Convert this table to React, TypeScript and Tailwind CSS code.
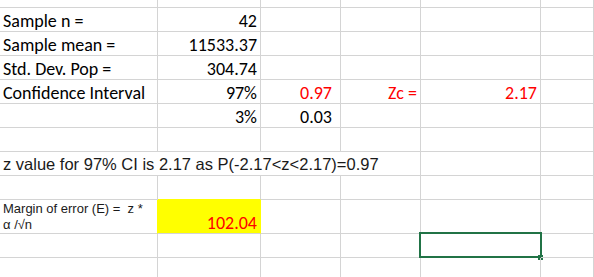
import type { ReactNode } from "react";

const line = "border-[#d4d4d4]";

type CellProps = {
  children?: ReactNode;
  className?: string;
};

const Cell = ({ children, className = "" }: CellProps) => (
  <div
    className={`relative flex items-end border-r border-b ${line} overflow-visible whitespace-nowrap ${className}`}
  >
    {children}
  </div>
);

const calibri = "font-['Carlito','Lato',sans-serif] text-[18px] leading-[18px] pb-[1px]";
const arial = "font-['Liberation_Sans',Arial,sans-serif]";

const labelRows = [
  { label: "Sample n =", value: "42" },
  { label: "Sample mean =", value: "11533.37" },
  { label: "Std. Dev. Pop =", value: "304.74" },
];

const Empty = () => (
  <>
    <Cell />
    <Cell />
    <Cell />
    <Cell />
    <Cell />
    <Cell />
  </>
);

export default function App() {
  return (
    <div className="w-[594px] h-[277px] overflow-hidden bg-white text-black">
      <div className="grid grid-cols-[158px_103px_80px_80px_120px_1fr] grid-rows-[8px_24px_24px_24px_24px_24px_24px_24px_24px_34px_24px_24px]">
        {/* row 0 (partial) */}
        <Empty />

        {labelRows.map((r) => (
          <div key={r.label} className="contents">
            <Cell className={`${calibri} pl-[3px]`}>{r.label}</Cell>
            <Cell className={`${calibri} justify-end pr-[3px]`}>{r.value}</Cell>
            <Cell />
            <Cell />
            <Cell />
            <Cell />
          </div>
        ))}

        {/* confidence interval */}
        <Cell className={`${calibri} pl-[3px]`}>Confidence Interval</Cell>
        <Cell className={`${calibri} justify-end pr-[3px]`}>97%</Cell>
        <Cell className={`${calibri} justify-end pr-[8px] text-[#ff0000]`}>0.97</Cell>
        <Cell className={`${calibri} justify-end pr-[3px] text-[#ff0000]`}>Zc =</Cell>
        <Cell className={`${calibri} justify-end pr-[3px] text-[#ff0000]`}>2.17</Cell>
        <Cell />

        <Cell />
        <Cell className={`${calibri} justify-end pr-[3px]`}>3%</Cell>
        <Cell className={`${calibri} justify-end pr-[8px]`}>0.03</Cell>
        <Cell />
        <Cell />
        <Cell />

        <Empty />

        {/* z value note, spills over A..D */}
        <Cell className={`col-span-4 ${arial} text-[16.5px] leading-[19px] pb-[1px] pl-[3px] text-[#1a1a1a]`}>
          z value for 97% CI is 2.17 as P(-2.17&lt;z&lt;2.17)=0.97
        </Cell>
        <Cell />
        <Cell />

        {/* row above margin: B cell bottom hidden by fill */}
        <Cell />
        <Cell className="border-b-[#ffff00]" />
        <Cell />
        <Cell />
        <Cell />
        <Cell />

        {/* margin of error */}
        <Cell className={`${arial} border-r-[#ffff00] whitespace-normal text-[13px] leading-[16px] pl-[3px] text-[#1a1a1a]`}>
          <span>
            Margin of error (E) =&nbsp; z *
            <br />
            α /√n
          </span>
        </Cell>
        <Cell className={`${calibri} bg-[#ffff00] border-r-[#ffff00] justify-end pr-[3px] text-[#ff0000]`}>
          102.04
        </Cell>
        <Cell />
        <Cell />
        <Cell />
        <Cell />

        {/* selected cell row */}
        <Cell />
        <Cell />
        <Cell />
        <Cell />
        <Cell>
          <div className="absolute left-[-2px] top-[-2px] right-[-2px] bottom-[-1px] border-2 border-[#217346]" />
          <div className="absolute right-[-3px] bottom-[-3px] w-[5px] h-[5px] bg-[#217346]" />
        </Cell>
        <Cell />

        <Empty />
      </div>
    </div>
  );
}
